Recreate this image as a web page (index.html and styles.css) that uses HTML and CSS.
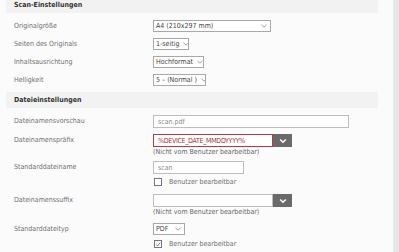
FILE: index.html
```html
<!DOCTYPE html>
<html lang="de">
<head>
<meta charset="utf-8">
<link rel="stylesheet" href="styles.css">
</head>
<body>
<div class="page">
  <div class="panel">
    <div class="section-head first">Scan-Einstellungen</div>
    <div class="rows top">
      <div class="row"><div class="label">Originalgröße</div><div class="ctl"><div class="select w118">A4 (210x297 mm)<svg class="car" width="6" height="4" viewBox="0 0 6 4"><path d="M0.5 0.8 L3 3.2 L5.5 0.8" fill="none" stroke="#888" stroke-width="0.8"/></svg></div></div></div>
      <div class="row"><div class="label">Seiten des Originals</div><div class="ctl"><div class="select w36">1-seitig<svg class="car" width="6" height="4" viewBox="0 0 6 4"><path d="M0.5 0.8 L3 3.2 L5.5 0.8" fill="none" stroke="#888" stroke-width="0.8"/></svg></div></div></div>
      <div class="row"><div class="label">Inhaltsausrichtung</div><div class="ctl"><div class="select w50">Hochformat<svg class="car" width="6" height="4" viewBox="0 0 6 4"><path d="M0.5 0.8 L3 3.2 L5.5 0.8" fill="none" stroke="#888" stroke-width="0.8"/></svg></div></div></div>
      <div class="row"><div class="label">Helligkeit</div><div class="ctl"><div class="select w52">5 – (Normal )<svg class="car" width="6" height="4" viewBox="0 0 6 4"><path d="M0.5 0.8 L3 3.2 L5.5 0.8" fill="none" stroke="#888" stroke-width="0.8"/></svg></div></div></div>
    </div>
    <div class="section-head">Dateieinstellungen</div>
    <div class="rows files">
      <div class="row r-preview"><div class="label">Dateinamensvorschau</div><div class="ctl"><div class="input w196">scan.pdf</div></div></div>
      <div class="row r-prefix"><div class="label">Dateinamenspräfix</div><div class="ctl">
        <div class="combo"><div class="input red w120">%DEVICE_DATE_MMDDYYYY%</div><div class="btn"><svg width="8" height="6" viewBox="0 0 8 6"><path d="M1.2 1.5 L4 4.3 L6.8 1.5" fill="none" stroke="#fff" stroke-width="1.5"/></svg></div></div>
        <div class="note">(Nicht vom Benutzer bearbeitbar)</div></div></div>
      <div class="row r-name"><div class="label">Standarddateiname</div><div class="ctl">
        <div class="input w90">scan</div>
        <div class="check"><span class="box"></span>Benutzer bearbeitbar</div></div></div>
      <div class="row r-suffix"><div class="label">Dateinamenssuffix</div><div class="ctl">
        <div class="combo"><div class="input w120"></div><div class="btn"><svg width="8" height="6" viewBox="0 0 8 6"><path d="M1.2 1.5 L4 4.3 L6.8 1.5" fill="none" stroke="#fff" stroke-width="1.5"/></svg></div></div>
        <div class="note">(Nicht vom Benutzer bearbeitbar)</div></div></div>
      <div class="row r-type"><div class="label">Standarddateityp</div><div class="ctl">
        <div class="select w31 s12">PDF<svg class="car" width="6" height="4" viewBox="0 0 6 4"><path d="M0.5 0.8 L3 3.2 L5.5 0.8" fill="none" stroke="#888" stroke-width="0.8"/></svg></div>
        <div class="check c2"><span class="box"><svg width="7" height="7" viewBox="0 0 7 7"><path d="M1.2 3.4 L3 5.2 L6 1.3" fill="none" stroke="#555" stroke-width="0.9"/></svg></span>Benutzer bearbeitbar</div></div></div>
    </div>
  </div>
  <div class="strip"></div>
</div>
</body>
</html>
```
FILE: styles.css
```css
* { box-sizing: border-box; }
html, body { margin: 0; padding: 0; }
body {
  width: 399px; height: 252px; overflow: hidden;
  background: #fbfbfb;
  font-family: "DejaVu Sans Condensed", "DejaVu Sans", sans-serif;
  font-size: 7px;
  color: #707070;
}
.page { display: flex; height: 252px; }
.panel { width: 393px; padding: 0 15px 0 6px; }
.strip { width: 6px; background: #e6e8e7; }
.section-head {
  background: #f2f2f2;
  height: 16px;
  line-height: 16px;
  padding-left: 8px;
  font-weight: bold;
  color: #333;
}
.section-head.first { margin-top: -3px; }
.rows { display: flex; flex-direction: column; }
.rows.top { padding-top: 7px; padding-bottom: 6px; gap: 6px; }
.rows.top .row { height: 12px; }
.rows.files { padding-top: 7px; }
.row { display: flex; }
.label { width: 147px; flex: none; padding-left: 8px; line-height: 13px; }
.rows.top .label { line-height: 12px; }
.ctl { display: flex; flex-direction: column; align-items: flex-start; }
.select, .input {
  flex: none;
  height: 13px; border: 1px solid #bdbdbd; background: #fff;
  display: flex; align-items: center; padding: 0 2px; color: #444;
  white-space: nowrap; overflow: hidden;
}
.select { height: 12px; border-color: #a8a8a8; }
.input { color: #8a8a8a; padding-left: 4px; }
.input.red { border-color: #b53a44; color: #a8303b; letter-spacing: -0.3px; }
.select .car { margin-left: auto; margin-right: 1px; flex: none; }
.select { gap: 4px; }
.w118 { width: 118px; }
.w120 { width: 120px; }
.w36 { width: 36px; }
.w50 { width: 51px; }
.w52 { width: 53px; }
.w196 { width: 196px; }
.w90 { width: 91px; }
.w31 { width: 32px; }
.combo { display: flex; flex: none; }
.btn { flex: none; width: 19px; height: 13px; background: #6a6a6a; display: flex; align-items: center; justify-content: center; }
.note { color: #666; line-height: 10px; }
.check { display: flex; align-items: center; margin-top: 4px; padding-left: 1px; line-height: 8px; }
.check.c2 { margin-top: 5px; }
.box { flex: none; width: 8px; height: 8px; border: 1px solid #777; background: #fff; margin-right: 7px; display: flex; align-items: center; justify-content: center; }
.r-preview { margin-bottom: 6px; }
.r-prefix { margin-bottom: 4px; }
.r-name { margin-bottom: 8px; }
.r-suffix { margin-bottom: 6px; }
```
